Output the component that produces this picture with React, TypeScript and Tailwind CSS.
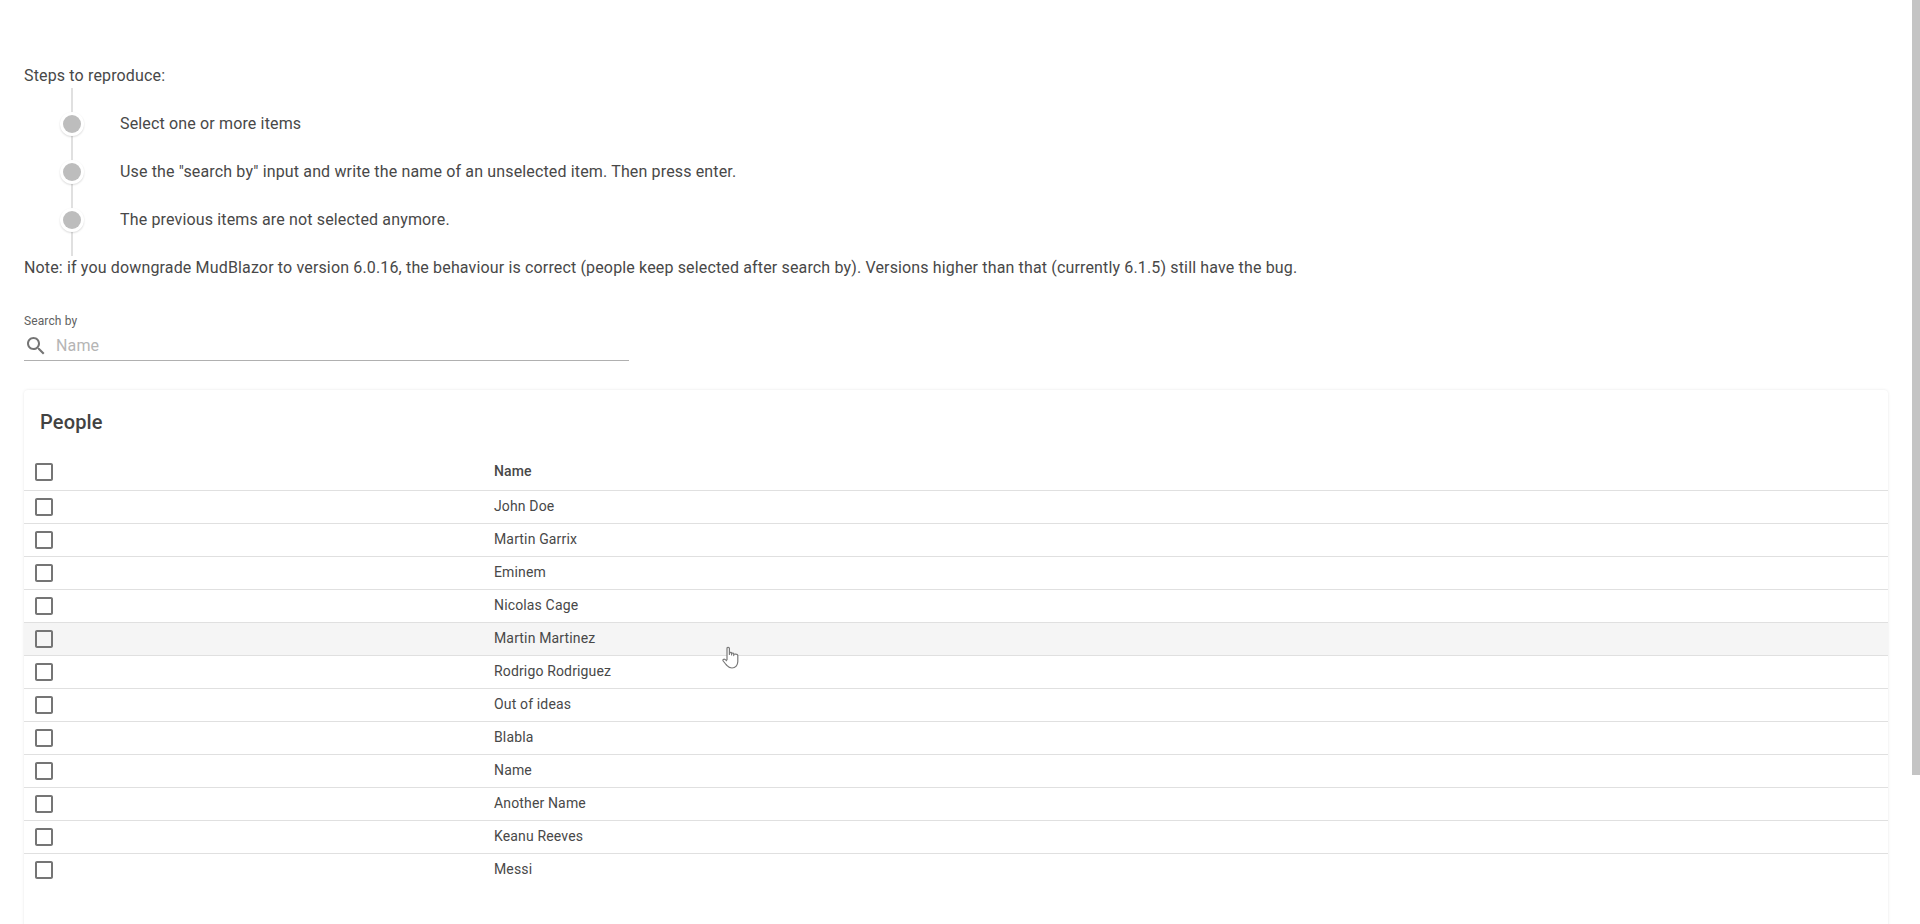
const people = [
  'John Doe',
  'Martin Garrix',
  'Eminem',
  'Nicolas Cage',
  'Martin Martinez',
  'Rodrigo Rodriguez',
  'Out of ideas',
  'Blabla',
  'Name',
  'Another Name',
  'Keanu Reeves',
  'Messi',
];

const steps = [
  'Select one or more items',
  'Use the "search by" input and write the name of an unselected item. Then press enter.',
  'The previous items are not selected anymore.',
];

const CheckBox = () => (
  <svg viewBox="0 0 24 24" className="w-6 h-6 fill-[#757575] shrink-0">
    <path d="M19 5v14H5V5h14m0-2H5c-1.1 0-2 .9-2 2v14c0 1.1.9 2 2 2h14c1.1 0 2-.9 2-2V5c0-1.1-.9-2-2-2z" />
  </svg>
);

const App = () => {
  return (
    <div className="flex h-screen overflow-hidden bg-white font-[Roboto,sans-serif] text-[#484848]">
      <div className="flex-1 min-w-0 px-6 pt-[64px]">
        <p className="text-base leading-6 tracking-[0.00938em]">Steps to reproduce:</p>

        {/* timeline */}
        <div className="relative py-3">
          <div className="absolute left-[47px] top-0 bottom-0 w-0.5 bg-[#e0e0e0]"></div>
          {steps.map((step) => (
            <div key={step} className="relative flex items-center h-12">
              <div className="w-6 h-6 ml-9 rounded-full bg-white shadow-[0_1px_2px_rgba(0,0,0,0.15)] flex items-center justify-center">
                <div className="w-[18px] h-[18px] rounded-full bg-[#bdbdbd]"></div>
              </div>
              <p className="ml-9 text-base leading-6 tracking-[0.00938em]">{step}</p>
            </div>
          ))}
        </div>

        <p className="text-base leading-6 tracking-[0.00938em]">
          Note: if you downgrade MudBlazor to version 6.0.16, the behaviour is correct (people keep selected after search by). Versions higher than that (currently 6.1.5) still have the bug.
        </p>

        {/* search */}
        <div className="mt-[34px] w-[605px]">
          <p className="text-xs leading-[14px] tracking-[0.00938em] text-[#616161]">Search by</p>
          <div className="flex items-center h-[30px] mt-[3px] border-b border-[#b0b0b0]">
            <svg viewBox="0 0 24 24" className="w-6 h-6 fill-[#757575] shrink-0">
              <path d="M15.5 14h-.79l-.28-.27C15.41 12.59 16 11.11 16 9.5 16 5.91 13.09 3 9.5 3S3 5.91 3 9.5 5.91 16 9.5 16c1.61 0 3.09-.59 4.23-1.57l.27.28v.79l5 4.99L20.49 19l-4.99-5zm-6 0C7.01 14 5 11.99 5 9.5S7.01 5 9.5 5 14 7.01 14 9.5 11.99 14 9.5 14z" />
            </svg>
            <span className="ml-2 text-base tracking-[0.00938em] text-[#b5b5b5]">Name</span>
          </div>
        </div>

        {/* table */}
        <div className="relative mt-[29px] rounded bg-white shadow-[0_0_3px_rgba(0,0,0,0.1)]">
          <div className="flex items-center h-16 px-4">
            <h6 className="text-xl font-medium tracking-[0.0075em] text-[#424242]">People</h6>
          </div>
          <div className="flex items-center h-[37px] pb-px border-b border-[#e0e0e0]">
            <div className="w-[470px] pl-2">
              <CheckBox />
            </div>
            <span className="pb-0.5 text-sm font-medium tracking-[0.01071em]">Name</span>
          </div>
          {people.map((name, i) => (
            <div
              key={name}
              className={
                i === 4
                  ? 'flex items-center h-[33px] border-b border-[#e0e0e0] bg-[#f5f5f5]'
                  : i === people.length - 1
                    ? 'flex items-center h-[33px] border-b border-transparent'
                    : 'flex items-center h-[33px] border-b border-[#e0e0e0]'
              }
            >
              <div className="w-[470px] pl-2">
                <CheckBox />
              </div>
              <span className="pb-0.5 text-sm tracking-[0.01071em]">{name}</span>
            </div>
          ))}
          <div className="h-[52px]"></div>

          {/* mouse cursor */}
          <svg viewBox="0 0 17 23" className="absolute left-[698px] top-[256px] w-[17px] h-[23px]">
            <path
              d="M5 14V2.2C5 1 7.4 1 7.4 2.2V8.5V7.2C7.4 6.2 9.6 6.2 9.6 7.2V9V7.8C9.6 6.9 11.7 6.9 11.7 7.8V9.6V8.7C11.7 7.9 15.6 7.9 15.8 9.4V15.5C15.8 19 13.5 22 10 22C6.5 22 5.5 20 4 18.5L1.2 15C0.4 13.8 1.8 12.6 3 13.4L5 15"
              fill="#fff"
              stroke="#7a7a7a"
              strokeWidth="1.2"
              strokeLinejoin="round"
            />
          </svg>
        </div>
      </div>

      {/* scrollbar */}
      <div className="w-2 shrink-0 bg-white">
        <div className="h-[775px] bg-[#c4c4c4]"></div>
      </div>
    </div>
  );
};

export default App;
